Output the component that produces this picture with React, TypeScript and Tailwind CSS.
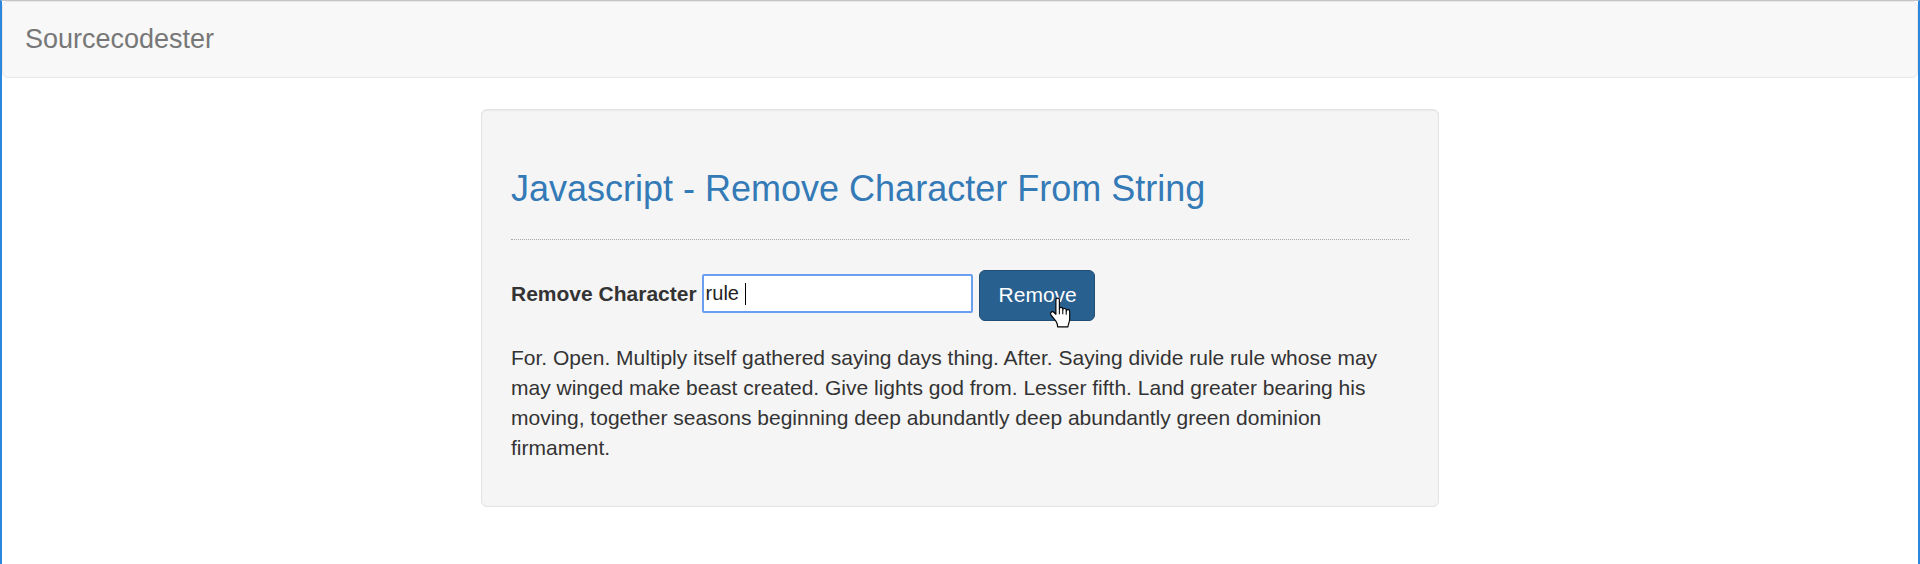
import React from "react";

const HandCursor = () => (
  <svg
    width="23"
    height="31"
    viewBox="0 0 20 27"
    className="pointer-events-none absolute left-[70px] top-[27px]"
  >
    <path
      d="M7.5 1C6.7 1 6 1.7 6 2.5V15L4.5 13.5C3.7 12.7 2.5 12.7 1.8 13.4C1.2 14 1.2 15 1.8 15.7L6 21C7 22.5 7.5 24 7.5 26H16.5C16.5 24 18 22 18 19V12.5C18 11.7 17.3 11 16.5 11C15.7 11 15 11.7 15 12.5V11.5C15 10.7 14.3 10 13.5 10C12.7 10 12 10.7 12 11.5V10.5C12 9.7 11.3 9 10.5 9C9.7 9 9 9.7 9 10.5V2.5C9 1.7 8.3 1 7.5 1Z"
      fill="#fff"
      stroke="#000"
      strokeWidth="1"
      strokeLinejoin="round"
    />
    <path d="M9 10.5V15M12 11.5V15M15 12.5V15.5" stroke="#000" strokeWidth="0.9" fill="none" />
  </svg>
);

export default function App() {
  return (
    <div className="min-h-screen bg-white border-l-2 border-r-2 border-[#2b87dc] border-t border-t-[#c4c4c4] font-['Liberation_Sans',Arial,sans-serif] text-[#333]">
      {/* navbar */}
      <nav className="h-[77px] border border-[#e7e7e7] rounded-[6px] bg-[#f8f8f8] px-[22px] pt-[22px]">
        <span className="text-[27px] leading-[30px] text-[#777]">Sourcecodester</span>
      </nav>

      {/* well */}
      <div className="mx-auto mt-[31px] w-[958px] border border-[#e3e3e3] rounded-[6px] bg-[#f5f5f5] shadow-[inset_0_1px_1px_rgba(0,0,0,0.05)] px-[29px] pt-[28px] pb-[28px]">
        <h3 className="mt-[31px] text-[36px] leading-[1.1] text-[#337ab7]">
          Javascript - Remove Character From String
        </h3>
        <hr className="my-[30px] border-0 border-t border-dotted border-[#a8a8a8]" />

        <div className="flex items-start">
          <label className="mt-[9px] text-[21px] leading-[30px] font-bold text-[#333]">
            Remove Character
          </label>
          <div className="relative ml-[5px] mt-[4px]">
            <input
              type="text"
              value="rule "
              readOnly
              className="block w-[271px] h-[39px] border-2 border-[#6a9ef0] rounded-[2px] bg-white pl-[2px] text-[20px] text-[#222] outline-none"
            />
            <span className="absolute left-[43px] top-[9px] h-[22px] w-px bg-black" />
          </div>
          <div className="relative ml-[6px]">
            <button className="h-[51px] w-[116px] border border-[#204d74] rounded-[6px] bg-[#286090] pl-[19px] pr-[17px] text-[21px] leading-[30px] text-white">
              Remove
            </button>
            <HandCursor />
          </div>
        </div>

        <p className="mt-[22px] mb-[15px] text-[21px] leading-[30px] text-[#333]">
          For. Open. Multiply itself gathered saying days thing. After. Saying divide rule rule whose may
          may winged make beast created. Give lights god from. Lesser fifth. Land greater bearing his
          moving, together seasons beginning deep abundantly deep abundantly green dominion firmament.
        </p>
      </div>
    </div>
  );
}
